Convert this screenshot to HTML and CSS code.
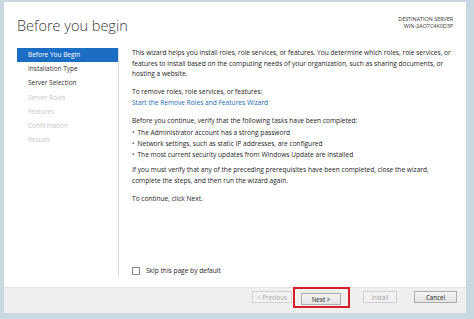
FILE: index.html
```html
<!DOCTYPE html>
<html lang="en">

<head>
    <meta charset="UTF-8">
    <title>Add Roles and Features Wizard</title>
    <link rel="stylesheet" href="styles.css">
</head>

<body>
    <div class="window">
        <div class="header">
            <h1>Before you begin</h1>
            <div class="server">
                <div>DESTINATION SERVER</div>
                <div>WIN-2AO7C4K0D3P</div>
            </div>
        </div>

        <div class="wizard">
            <ul class="steps">
                <li class="active">Before You Begin</li>
                <li>Installation Type</li>
                <li>Server Selection</li>
                <li class="disabled">Server Roles</li>
                <li class="disabled">Features</li>
                <li class="disabled">Confirmation</li>
                <li class="disabled">Results</li>
            </ul>

            <div class="content">
                <p>This wizard helps you install roles, role services, or features. You determine which roles, role services, or
                    features to install based on the computing needs of your organization, such as sharing documents, or
                    hosting a website.</p>
                <p>To remove roles, role services, or features:<br>
                    <a href="#">Start the Remove Roles and Features Wizard</a></p>
                <p class="lead">Before you continue, verify that the following tasks have been completed:</p>
                <ul class="tasks">
                    <li>The Administrator account has a strong password</li>
                    <li>Network settings, such as static IP addresses, are configured</li>
                    <li>The most current security updates from Windows Update are installed</li>
                </ul>
                <p>If you must verify that any of the preceding prerequisites have been completed, close the wizard,
                    complete the steps, and then run the wizard again.</p>
                <p>To continue, click Next.</p>

                <label class="skip">
                    <span class="box"></span>
                    Skip this page by default
                </label>
            </div>
        </div>

        <div class="footer">
            <button class="btn" disabled>&lt; Previous</button>
            <span class="highlight">
                <button class="btn">Next &gt;</button>
            </span>
            <button class="btn install" disabled>Install</button>
            <button class="btn cancel">Cancel</button>
        </div>
    </div>
</body>

</html>
```

FILE: styles.css
```css
* {
    margin: 0;
    padding: 0;
    box-sizing: border-box;
}

body {
    width: 474px;
    height: 319px;
    overflow: hidden;
    background: #c9d8e1;
    padding: 2px 8px 6px 4px;
    font-family: "Open Sans", "Liberation Sans", sans-serif;
    color: #1e1e1e;
}

.window {
    height: 100%;
    background: #fff;
    display: flex;
    flex-direction: column;
}

.header {
    display: flex;
    justify-content: space-between;
    padding: 14px 13px 0 13px;
    height: 46px;
}

h1 {
    font-size: 14.5px;
    font-weight: 300;
    color: #3a3a3a;
    line-height: 20px;
}

.server {
    text-align: right;
    font-size: 5.4px;
    line-height: 6.5px;
    color: #333;
    padding-top: 0;
}

.wizard {
    flex: 1;
    display: flex;
    padding-bottom: 11px;
}

.steps {
    list-style: none;
    width: 102px;
    margin-left: 13px;
    border-right: 1px solid #dcdcdc;
    font-size: 6.5px;
    color: #333;
}

.steps li {
    height: 14.2px;
    line-height: 14.2px;
    padding-left: 11px;
}

.steps li.active {
    background: #1c6ec5;
    color: #fff;
}

.steps li.disabled {
    color: #c8c8c8;
}

.content {
    flex: 1;
    padding: 0 8px 0 13px;
    font-size: 6.6px;
    line-height: 10.5px;
    display: flex;
    flex-direction: column;
}

.content p {
    margin-bottom: 7.5px;
}

.content p.lead {
    margin-bottom: 1px;
}

.content a {
    color: #1a6ab8;
    text-decoration: none;
}

.tasks {
    list-style: none;
    line-height: 11px;
    margin-bottom: 5px;
}

.tasks li::before {
    content: "\2022";
    margin-right: 3px;
    color: #555;
}

.skip {
    margin-top: auto;
    display: flex;
    align-items: center;
    gap: 6px;
    padding-left: 0;
}

.box {
    width: 8px;
    height: 8px;
    border: 1px solid #8a8a8a;
    background: #fff;
}

.footer {
    height: 26px;
    background: #efefef;
    border-top: 1px solid #e2e2e2;
    display: flex;
    align-items: flex-start;
    padding: 3px 0 0 248px;
}

.btn {
    width: 40px;
    height: 12px;
    font-family: inherit;
    font-size: 6.2px;
    color: #222;
    background: linear-gradient(#f4f4f4, #e3e3e3);
    border: 1px solid #acacac;
}

.btn:disabled {
    color: #a8a8a8;
    border-color: #d0d0d0;
    background: #f2f2f2;
}

.highlight {
    margin: -4px 0 0 1px;
    padding: 4px 7px 1px 6px;
    border: 2px solid #d21f2a;
    display: flex;
}

.install {
    width: 34px;
    margin-left: 13px;
}

.cancel {
    width: 43px;
    margin-left: 17px;
}
```
